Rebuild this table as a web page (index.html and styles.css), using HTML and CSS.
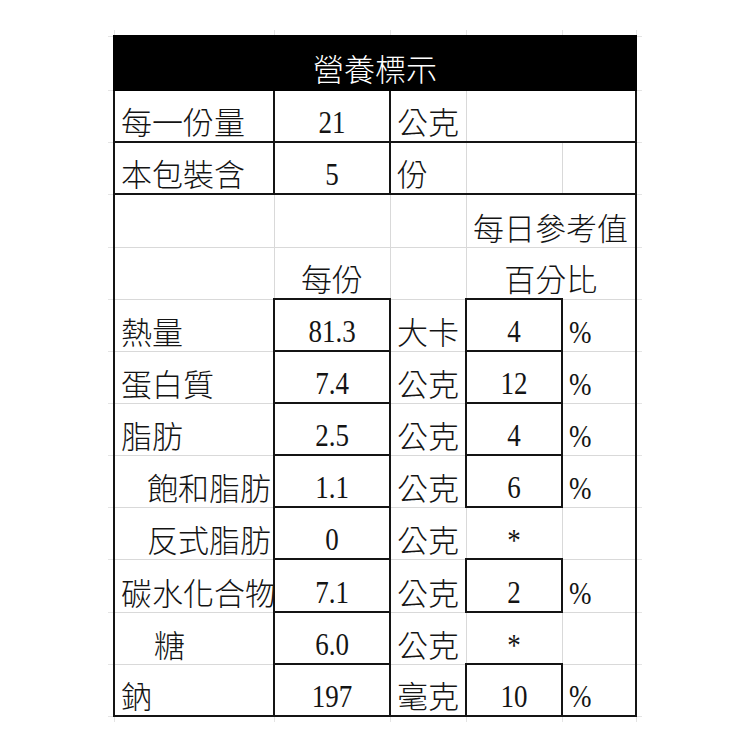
FILE: index.html
```html
<!DOCTYPE html>
<html lang="zh-Hant">
<head>
<meta charset="utf-8">
<title>營養標示</title>
<link rel="stylesheet" href="styles.css">
</head>
<body>
<div class="sheet">
<table class="grid">
<colgroup>
<col class="w-edge"><col class="w1"><col class="w2"><col class="w3"><col class="w4"><col class="w5"><col class="w-edge">
</colgroup>
<tr class="r-edge"><td class="corner"></td><td class="et"></td><td class="et"></td><td class="et"></td><td class="et"></td><td class="et"></td><td class="corner"></td></tr>
<tr class="r-head"><td class="el"></td><th colspan="5" class="head">營養標示</th><td class="er"></td></tr>
<tr class="r52 rb"><td class="el"></td><td class="c1">每一份量</td><td class="num box"><span class="fig">21</span></td><td class="unit">公克</td><td colspan="2" class="cl"></td><td class="er"></td></tr>
<tr class="r52 rb"><td class="el"></td><td class="c1">本包裝含</td><td class="num box"><span class="fig">5</span></td><td class="unit">份</td><td></td><td class="cl"></td><td class="er"></td></tr>
<tr class="r53"><td class="el"></td><td class="c1"></td><td></td><td></td><td colspan="2" class="cl right">每日參考值</td><td class="er"></td></tr>
<tr class="r52"><td class="el"></td><td class="c1"></td><td class="mid">每份</td><td></td><td colspan="2" class="cl mid">百分比</td><td class="er"></td></tr>
<tr class="r52"><td class="el"></td><td class="c1">熱量</td><td class="num box"><span class="fig">81.3</span></td><td class="unit">大卡</td><td class="num box"><span class="fig">4</span></td><td class="cl pct"><span class="fig">%</span></td><td class="er"></td></tr>
<tr class="r52"><td class="el"></td><td class="c1">蛋白質</td><td class="num box"><span class="fig">7.4</span></td><td class="unit">公克</td><td class="num box"><span class="fig">12</span></td><td class="cl pct"><span class="fig">%</span></td><td class="er"></td></tr>
<tr class="r52"><td class="el"></td><td class="c1">脂肪</td><td class="num box"><span class="fig">2.5</span></td><td class="unit">公克</td><td class="num box"><span class="fig">4</span></td><td class="cl pct"><span class="fig">%</span></td><td class="er"></td></tr>
<tr class="r52"><td class="el"></td><td class="c1 ind">飽和脂肪</td><td class="num box"><span class="fig">1.1</span></td><td class="unit">公克</td><td class="num box"><span class="fig">6</span></td><td class="cl pct"><span class="fig">%</span></td><td class="er"></td></tr>
<tr class="r52"><td class="el"></td><td class="c1 ind">反式脂肪</td><td class="num box"><span class="fig">0</span></td><td class="unit">公克</td><td class="num star"><span class="fig">*</span></td><td class="cl"></td><td class="er"></td></tr>
<tr class="r53"><td class="el"></td><td class="c1">碳水化合物</td><td class="num box"><span class="fig">7.1</span></td><td class="unit">公克</td><td class="num box"><span class="fig">2</span></td><td class="cl pct"><span class="fig">%</span></td><td class="er"></td></tr>
<tr class="r52"><td class="el"></td><td class="c1 ind2">糖</td><td class="num box"><span class="fig">6.0</span></td><td class="unit">公克</td><td class="num star"><span class="fig">*</span></td><td class="cl"></td><td class="er"></td></tr>
<tr class="r52 rlast"><td class="el"></td><td class="c1">鈉</td><td class="num box"><span class="fig">197</span></td><td class="unit">毫克</td><td class="num box"><span class="fig">10</span></td><td class="cl pct"><span class="fig">%</span></td><td class="er"></td></tr>
<tr class="r-edge"><td class="corner"></td><td class="eb"></td><td class="eb"></td><td class="eb"></td><td class="eb"></td><td class="eb"></td><td class="corner"></td></tr>
</table>
</div>
</body>
</html>
```
FILE: styles.css
```css
html, body {
  margin: 0;
  padding: 0;
  background: #ffffff;
}

.sheet {
  padding: 30px 0 0 108px;
}

.grid {
  border-collapse: collapse;
  table-layout: fixed;
  width: 534px;
}

.w-edge { width: 6px; }
.w1 { width: 160px; }
.w2 { width: 116px; }
.w3 { width: 76px; }
.w4 { width: 96px; }
.w5 { width: 74px; }

.r-edge { height: 6px; }
.r-head { height: 54px; }
.r52 { height: 52px; }
.r53 { height: 53px; }

.grid td,
.grid th {
  border: 1px solid #d9d9d9;
  padding: 0 6px 5px 6px;
  vertical-align: bottom;
  white-space: nowrap;
  overflow: visible;
  font-family: "Noto Sans CJK TC", "Noto Sans CJK JP", sans-serif;
  font-weight: 300;
  font-size: 31px;
  line-height: 1;
  color: #141414;
  text-align: left;
}

.grid td.corner {
  border: none;
  padding: 0;
}

.grid td.et,
.grid td.eb {
  border: none;
  border-left: 1px solid #e4e4e4;
  border-right: 1px solid #e4e4e4;
  padding: 0;
}

.grid td.el,
.grid td.er {
  border: none;
  border-top: 1px solid #e4e4e4;
  border-bottom: 1px solid #e4e4e4;
  padding: 0;
}

.grid th.head {
  background: #000000;
  color: #ffffff;
  border: 2px solid #000000;
  text-align: center;
  padding-bottom: 6px;
}

.grid td.c1 {
  border-left: 2px solid #141414;
}

.grid td.cl {
  border-right: 2px solid #141414;
}

.grid tr.rb td:not(.el):not(.er),
.grid tr.rlast td:not(.el):not(.er) {
  border-bottom: 2px solid #141414;
}

.grid td.box {
  border: 2px solid #141414;
}

.grid td.num,
.grid td.pct {
  font-family: "Liberation Serif", "Times New Roman", serif;
  font-weight: 400;
  font-size: 27px;
  padding-bottom: 2px;
}

.grid td.num {
  text-align: center;
}

.fig {
  display: inline-block;
  transform: scaleY(1.14);
  transform-origin: 50% 100%;
}

.grid td.star {
  padding-bottom: 1px;
}

.grid td.mid {
  text-align: center;
}

.grid td.right {
  text-align: right;
  padding-right: 7px;
}

.grid td.ind {
  padding-left: 32px;
}

.grid td.ind2 {
  padding-left: 39px;
}
```
